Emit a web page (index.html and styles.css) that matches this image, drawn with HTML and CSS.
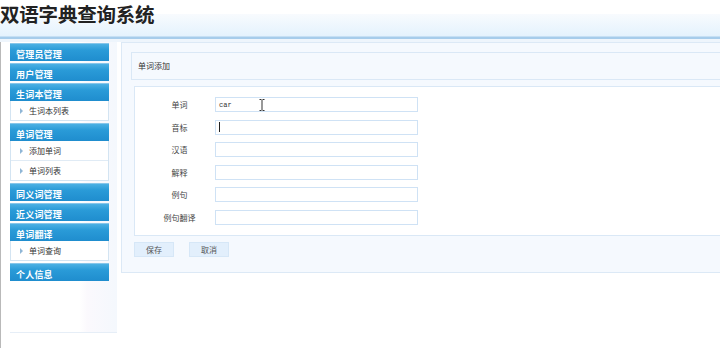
FILE: index.html
```html
<!DOCTYPE html>
<html lang="zh-CN">
<head>
<meta charset="utf-8">
<title>双语字典查询系统</title>
<link rel="stylesheet" href="styles.css">
</head>
<body>
<header class="top"><h1 class="title">双语字典查询系统</h1></header>
<div class="strip"></div>
<div class="layout">
  <aside class="side">
    <nav class="menu">
      <div class="group"><div class="gh">管理员管理</div></div>
      <div class="group"><div class="gh">用户管理</div></div>
      <div class="group"><div class="gh">生词本管理</div>
        <ul class="subs"><li class="sub">生词本列表</li></ul></div>
      <div class="group"><div class="gh">单词管理</div>
        <ul class="subs"><li class="sub">添加单词</li><li class="sub">单词列表</li></ul></div>
      <div class="group"><div class="gh">同义词管理</div></div>
      <div class="group"><div class="gh">近义词管理</div></div>
      <div class="group"><div class="gh">单词翻译</div>
        <ul class="subs"><li class="sub">单词查询</li></ul></div>
      <div class="group"><div class="gh">个人信息</div></div>
    </nav>
  </aside>
  <main class="main">
    <section class="panel">
      <div class="ptitle">单词添加</div>
      <div class="form">
        <div class="row"><span class="lbl">单词</span><div class="field"><span class="val">car</span><svg class="ibeam" width="6" height="12" viewBox="0 0 6 12"><path d="M0.5 0.5h2M3.5 0.5h2M3 1v10M0.5 11.5h2M3.5 11.5h2" stroke="#333" stroke-width="1" fill="none"/></svg></div></div>
        <div class="row"><span class="lbl">音标</span><div class="field"><span class="caret"></span></div></div>
        <div class="row"><span class="lbl">汉语</span><div class="field"></div></div>
        <div class="row"><span class="lbl">解释</span><div class="field"></div></div>
        <div class="row"><span class="lbl">例句</span><div class="field"></div></div>
        <div class="row"><span class="lbl">例句翻译</span><div class="field"></div></div>
      </div>
      <div class="btns"><button class="btn">保存</button><button class="btn">取消</button></div>
    </section>
  </main>
</div>
</body>
</html>
```
FILE: styles.css
```css
* { box-sizing: border-box; }
html, body { margin: 0; padding: 0; }
body {
  width: 720px;
  height: 348px;
  overflow: hidden;
  background: #fff;
  font-family: "Noto Sans CJK SC", "Noto Sans", sans-serif;
  color: #333;
}
.top {
  height: 39px;
  background: linear-gradient(to bottom, #fff 0, #fff 14px, #f8fbfe 14px, #e4f2fd 36px, #a6cceb 37px, #a6cceb 39px);
}
.title {
  margin: 0;
  padding-top: 1px;
  font-size: 19.5px;
  line-height: 26px;
  font-weight: bold;
  color: #222;
  letter-spacing: -0.2px;
}
.strip {
  height: 3px;
  background: #eef5fc;
}
.layout {
  display: flex;
  height: 306px;
}
.side {
  width: 120px;
  flex: none;
  border-left: 1px solid #b9b9b9;
  padding-left: 9px;
  padding-right: 3px;
}
.menu {
  height: 291px;
  padding-top: 1px;
  border-bottom: 1px solid #e6eef7;
  background: linear-gradient(to right, #fff 0, #fff 65%, #fbf9fd 72%, #f4f8fd 100%);
}
.group {
  width: 99px;
  margin-bottom: 2px;
}
.gh {
  height: 18px;
  overflow: hidden;
  border-top: 1px solid #86c6ea;
  background: linear-gradient(to bottom, #4cb0e3 0, #2a9bd8 35%, #1f8dce 100%);
  color: #fff;
  font-weight: bold;
  font-size: 9px;
  line-height: 13px;
  padding-top: 4px;
  padding-left: 6px;
  letter-spacing: 0.2px;
}
.subs {
  list-style: none;
  margin: 0;
  padding: 0;
  border: 1px solid #d3e4f2;
  border-top: none;
  background: #fff;
}
.sub {
  height: 20px;
  line-height: 19px;
  font-size: 8px;
  color: #333;
  padding-left: 18px;
  border-bottom: 1px solid #e0ebf5;
  position: relative;
}
.sub:last-child { border-bottom: none; height: 19px; }
.sub::before {
  content: "";
  position: absolute;
  left: 9px;
  top: 7px;
  border-left: 3px solid #8fb6d6;
  border-top: 3px solid transparent;
  border-bottom: 3px solid transparent;
}
.main {
  flex: 1;
  min-width: 0;
  padding-left: 1px;
}
.panel {
  margin-right: -30px;
  height: 231px;
  background: #f5f9fe;
  border: 1px solid #dce9f6;
  padding: 9px 0 0 9px;
}
.ptitle {
  height: 28px;
  border: 1px solid #dae8f6;
  background: #f5f9fe;
  font-size: 8px;
  line-height: 26px;
  padding-left: 6px;
  color: #333;
}
.form {
  margin: 6px 0 0 3px;
  background: #fff;
  border: 1px solid #dae8f6;
  padding: 10px 0 10px 9px;
  display: grid;
  row-gap: 7.5px;
}
.row {
  display: flex;
  align-items: center;
  height: 15px;
}
.lbl {
  width: 71px;
  text-align: center;
  font-size: 8px;
  color: #444;
}
.field {
  width: 203px;
  height: 15px;
  border: 1px solid #cfe2f5;
  background: #fff;
  position: relative;
  padding-left: 3px;
  display: flex;
  align-items: center;
}
.val {
  font-family: "Liberation Mono", monospace;
  font-size: 7px;
  color: #333;
}
.ibeam {
  position: absolute;
  left: 43px;
  top: 1px;
}
.caret {
  display: block;
  width: 1px;
  height: 10px;
  background: #222;
}
.btns {
  display: flex;
  gap: 15px;
  margin: 6px 0 0 3px;
}
.btn {
  width: 40px;
  height: 15px;
  padding: 0;
  margin: 0;
  border: 1px solid #d6e7f7;
  background: #e2effc;
  color: #555;
  font-family: "Noto Sans CJK SC", sans-serif;
  font-size: 8px;
  line-height: 13px;
}
```
